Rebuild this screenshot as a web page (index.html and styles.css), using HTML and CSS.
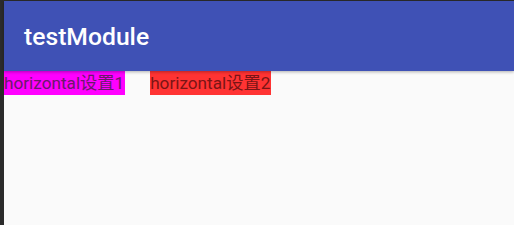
FILE: index.html
```html
<!DOCTYPE html>
<html lang="zh-CN">
<head>
    <meta charset="UTF-8">
    <title>testModule</title>
    <link rel="stylesheet" href="styles.css">
</head>
<body>
<div class="screen">
    <header class="toolbar">
        <h1>testModule</h1>
    </header>
    <div class="row">
        <span class="label label-pink">horizontal设置1</span>
        <span class="label label-red">horizontal设置2</span>
    </div>
</div>
</body>
</html>
```

FILE: styles.css
```css
* {
    margin: 0;
    padding: 0;
    box-sizing: border-box;
}

body {
    background: #2b2b2b;
    width: 514px;
    height: 225px;
    overflow: hidden;
    padding: 1px 0 0 4px;
    font-family: Roboto, "Noto Sans CJK SC", sans-serif;
}

.screen {
    background: #fafafa;
    height: 224px;
}

/* barra superior */
.toolbar {
    background: #3f51b5;
    height: 70px;
    display: flex;
    align-items: center;
    padding-left: 20px;
    box-shadow: 0 1px 3px rgba(0, 0, 0, 0.3);
    position: relative;
}

.toolbar h1 {
    color: #fff;
    font-size: 24.7px;
    font-weight: 500;
}

.row {
    display: flex;
    gap: 25px;
}

.label {
    font-size: 17.2px;
    line-height: 24px;
    height: 24px;
    color: #5a1a1a;
    padding-right: 1px;
}

.label-pink {
    background: #ff00ff;
    color: #6a1a6a;
}

.label-red {
    background: #ff3333;
    color: #7a1515;
}
```
